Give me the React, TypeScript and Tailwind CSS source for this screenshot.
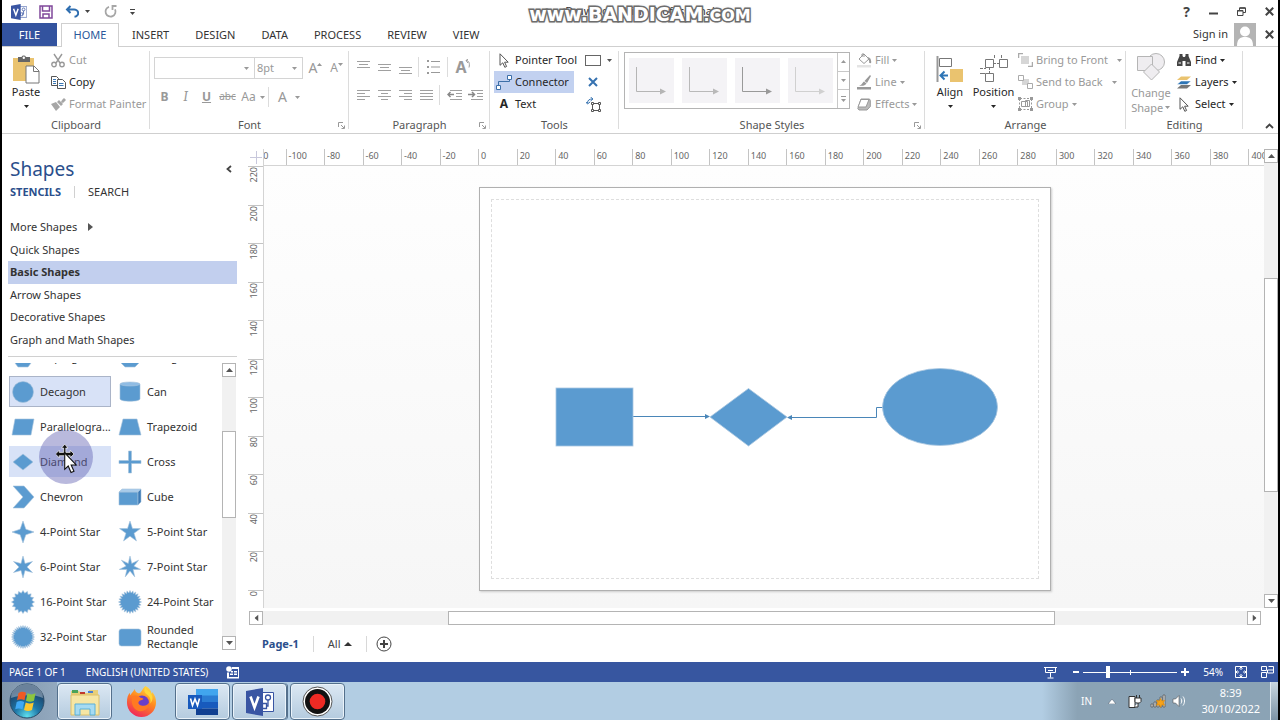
import type { ReactNode } from "react";

/* ---------- small helpers ---------- */

function Caret({ className = "" }: { className?: string }) {
  return (
    <svg width="5" height="3" viewBox="0 0 5 3" className={"shrink-0 " + className} aria-hidden="true">
      <path d="M0 0h5L2.500 3z" fill="currentColor" />
    </svg>
  );
}

function starPoints(n: number, outer: number, inner: number) {
  const pts: string[] = [];
  for (let i = 0; i < n * 2; i++) {
    const r = i % 2 ? inner : outer;
    const a = (Math.PI * i) / n - Math.PI / 2;
    pts.push(`${(12 + r * Math.cos(a)).toFixed(2)},${(12 + r * Math.sin(a)).toFixed(2)}`);
  }
  return pts.join(" ");
}

function RibbonGroup({
  label,
  width,
  launcher,
  children,
}: {
  label: string;
  width: string;
  launcher?: boolean;
  children: ReactNode;
}) {
  return (
    <section aria-label={label} className={"relative flex shrink-0 flex-col " + width}>
      <div className="flex flex-1 pt-0.5">{children}</div>
      <div className="flex h-4 items-center justify-center text-[#555]">{label}</div>
      {launcher && (
        <button aria-label={label + " options"} className="absolute right-1 bottom-1 text-[#999]">
          <svg width="7" height="7" viewBox="0 0 7 7" fill="none" stroke="currentColor">
            <path d="M.5 5V.5H5M3 3l3 3M6.500 3.500v3h-3" />
          </svg>
        </button>
      )}
      <div className="absolute top-1 right-0 bottom-1 w-px bg-[#dcdcdc]" />
    </section>
  );
}

function SmallButton({
  icon,
  label,
  disabled,
  active,
  caret,
  wideCaret,
}: {
  icon: ReactNode;
  label: string;
  disabled?: boolean;
  active?: boolean;
  caret?: boolean;
  wideCaret?: boolean;
}) {
  return (
    <button
      className={
        "flex h-[22px] items-center gap-[3px] pl-0.5 whitespace-nowrap " +
        (disabled ? "text-[#999] " : "text-[#262626] ") +
        (active ? "bg-[#c2d1f0]" : "")
      }
    >
      <span className="flex w-4 shrink-0 justify-center">{icon}</span>
      {label}
      {caret && <Caret className={wideCaret ? "ml-1.5" : ""} />}
    </button>
  );
}

/* ---------- ribbon icons ---------- */

const CutIcon = (
  <svg width="14" height="15" viewBox="0 0 14 15" fill="none" stroke="#999" strokeWidth="1.4">
    <path d="M3 1l6 9M11 1L5 10" />
    <circle cx="3" cy="11.500" r="2.200" />
    <circle cx="11" cy="11.500" r="2.200" />
  </svg>
);
const CopyIcon = (
  <svg width="15" height="13" viewBox="0 0 15 13" fill="#fff" stroke="#555">
    <path d="M.5.5h5l2 2v7h-7z" />
    <path d="M2 3.500h3M2 5.500h3M2 7.500h3" stroke="#3b78b5" />
    <path d="M6.500 3.500h5l3 3v6h-8z" />
    <path d="M8 7.500h4.500M8 9.500h4.500" stroke="#3b78b5" />
  </svg>
);
const PainterIcon = (
  <svg width="15" height="13" viewBox="0 0 15 13" fill="#a6a6a6">
    <path d="M0 6l5-2 4 5-4 4zM6 4l2-2 4 4-2 2zM11 2l2-2 2 2-3 3-2-1z" />
  </svg>
);
const PasteIcon = (
  <svg width="28" height="29" viewBox="0 0 28 29">
    <path d="M1 3h21v23H1z" fill="#eac36f" />
    <path d="M6 2h3.500a2.500 2.500 0 0 1 4.500 0H18v5H6z" fill="#666" />
    <circle cx="11.800" cy="2.800" r="1.200" fill="#fff" />
    <path d="M14 11h8l5 5v12H14z" fill="#fff" stroke="#777" />
    <path d="M21.500 11v5.500H27" fill="none" stroke="#777" />
  </svg>
);
const PointerIcon = (
  <svg width="10" height="15" viewBox="0 0 10 15" fill="#fff" stroke="#555">
    <path d="M1 .8v11.500l2.800-2.500 2 4.500 1.800-.8-2-4.300h3.600z" />
  </svg>
);
const ConnectorIcon = (
  <svg width="16" height="15" viewBox="0 0 16 15" fill="#fff" stroke="#3d6fa8">
    <path d="M2.500 10.500V6.500H13.500V5" fill="none" />
    <path d="M.5 10.500h4v4h-4zM11.500.5h4v4h-4z" />
  </svg>
);
const FillIcon = (
  <svg width="16" height="15" viewBox="0 0 16 15" fill="none" stroke="#999">
    <path d="M3 6l5-5 5 5-5 4.500zM6 4V1h2v3" />
    <path d="M12 5c2 1 2.500 3 2 5" strokeWidth="2" />
    <path d="M1 12h14v2.500H1z" fill="#e4e4e4" stroke="none" />
  </svg>
);
const LineIcon = (
  <svg width="16" height="15" viewBox="0 0 16 15" fill="#999">
    <path d="M1 12h14v2.500H1zM14 0l1 1-4 7-2.500-2zM8 6.500l2.500 2C9 11 6 11 3 10.500 6 10 6 8 8 6.500z" />
  </svg>
);
const EffectsIcon = (
  <svg width="14" height="13" viewBox="0 0 14 13" stroke="#999">
    <path d="M4 1h8.500l.8 1.500v6L10 12H2L.8 10.500z" fill="#bbb" />
    <path d="M4 1.500h8L9 9H1z" fill="#fff" />
  </svg>
);
const BringIcon = (
  <svg width="15" height="14" viewBox="0 0 15 14" fill="none" stroke="#aaa">
    <path d="M.5 5V.5H5M10 13.500h4.500V9" strokeWidth="1.500" />
    <path d="M3 3h8v8H3z" fill="#d6d6d6" stroke="none" />
  </svg>
);
const SendIcon = (
  <svg width="15" height="14" viewBox="0 0 15 14" fill="#fff" stroke="#aaa">
    <path d="M4 4h7v6H4z" fill="#d6d6d6" stroke="none" />
    <path d="M.5.5h5v5h-5zM9.500 8.500h5v5h-5z" />
  </svg>
);
const GroupIcon = (
  <svg width="15" height="14" viewBox="0 0 15 14" fill="none" stroke="#999">
    <path d="M1.500 2v10M13.500 2v10M2 1.500h11M2 12.500h11" strokeDasharray="2 1.500" />
    <path d="M3.500 4.500h6v5h-6zM7.500 3.500h4v6h-4z" />
    <path d="M0 0h3v3H0zM12 0h3v3h-3zM0 11h3v3H0zM12 11h3v3h-3z" fill="#999" stroke="none" />
  </svg>
);
const FindIcon = (
  <svg width="14" height="12" viewBox="0 0 14 12" fill="#444">
    <path d="M2.500 0h3v2l.8 1h1.400l.8-1V0h3v2L14 8v4H8.500V7h-3v5H0V8l2.500-6z" />
    <path d="M1.500 9h2.500M10 9h2.500" stroke="#fff" />
  </svg>
);
const LayersIcon = (
  <svg width="14" height="13" viewBox="0 0 14 13">
    <path d="M0 12.500L4 9h10l-4 3.500z" fill="#777" />
    <path d="M0 8.500L4 5h10l-4 3.500z" fill="#2e75b6" stroke="#fff" strokeWidth=".5" />
    <path d="M0 4L4 .5h10L10 4z" fill="#eac36f" />
  </svg>
);

function Lines({ rows, y0 = 2 }: { rows: [number, number][]; y0?: number }) {
  return (
    <svg width="13" height="14" viewBox="0 0 13 14" stroke="#a0a0a0">
      {rows.map(([a, b], i) => (
        <path key={i} d={`M${a} ${y0 + i * 3 + 0.5}H${b}`} />
      ))}
    </svg>
  );
}

function IndentIcon({ right }: { right?: boolean }) {
  return (
    <svg width="15" height="12" viewBox="0 0 15 12" fill="none" stroke="#a0a0a0">
      <path d="M3 1.500h12M9 4.500h6M9 7.500h6M3 10.500h12" />
      <path d={right ? "M0 5.500h6M4 3l2.500 2.500L4 8" : "M1 5.500h6M3.500 3L1 5.500 3.500 8"} strokeWidth="1.500" stroke="#888" />
    </svg>
  );
}

function Tool({ label, children, w = "w-[21px]" }: { label: string; children: ReactNode; w?: string }) {
  return (
    <button aria-label={label} className={"flex h-5 shrink-0 items-center justify-center text-[#999] " + w}>
      {children}
    </button>
  );
}

const Sep = () => <span className="h-5 w-px shrink-0 bg-[#dcdcdc]" />;

/* ---------- ribbon ---------- */

function Ribbon() {
  return (
    <div className="flex h-[87px] shrink-0 border-b border-[#cfcfcf]">
      <RibbonGroup label="Clipboard" width="w-[148px]">
        <button className="flex w-[46px] flex-col items-center pt-1.5 pl-0.5 text-[#262626]">
          {PasteIcon}
          <span>Paste</span>
          <Caret className="mt-1" />
        </button>
        <div className="flex flex-col items-start">
          <SmallButton icon={CutIcon} label="Cut" disabled />
          <SmallButton icon={CopyIcon} label="Copy" />
          <SmallButton icon={PainterIcon} label="Format Painter" disabled />
        </div>
      </RibbonGroup>

      <RibbonGroup label="Font" width="w-[199px]" launcher>
        <div className="flex flex-col gap-2 pt-2 pl-1">
          <div className="flex items-center">
            <div className="relative flex text-[#999]">
              <select aria-label="Font" className="h-[22px] w-[101px] appearance-none border border-[#d4d4d4] bg-white" />
              <Caret className="absolute top-[10px] right-1.5" />
            </div>
            <div className="relative -ml-px flex text-[#999]">
              <select
                aria-label="Font size"
                className="h-[22px] w-[49px] appearance-none border border-[#d4d4d4] bg-white pl-0.5"
              >
                <option>8pt</option>
              </select>
              <Caret className="absolute top-[10px] right-1.5" />
            </div>
            <Tool label="Grow font">
              <span className="pl-1 text-sm">A</span>
              <Caret className="mb-2 rotate-180" />
            </Tool>
            <Tool label="Shrink font">
              <span className="pl-1 text-xs">A</span>
              <Caret className="mb-2" />
            </Tool>
          </div>
          <div className="flex items-center text-xs">
            <Tool label="Bold"><b>B</b></Tool>
            <Tool label="Italic"><i className="font-serif text-sm">I</i></Tool>
            <Tool label="Underline"><b className="underline">U</b></Tool>
            <Tool label="Strikethrough"><span className="text-[10px] line-through">abc</span></Tool>
            <Tool label="Change case" w="w-[30px]">
              Aa
              <Caret className="ml-1" />
            </Tool>
            <Sep />
            <Tool label="Font color" w="w-[40px]">
              <span className="text-sm">A</span>
              <Caret className="ml-2" />
            </Tool>
          </div>
        </div>
      </RibbonGroup>

      <RibbonGroup label="Paragraph" width="w-[141px]" launcher>
        <div className="flex flex-col gap-2 pt-2 pl-1">
          <div className="flex items-center">
            <Tool label="Align top"><Lines rows={[[0, 13], [2, 11], [0, 13]]} y0={1} /></Tool>
            <Tool label="Align middle"><Lines rows={[[0, 13], [2, 11], [0, 13]]} y0={4} /></Tool>
            <Tool label="Align bottom"><Lines rows={[[0, 13], [2, 11], [0, 13]]} y0={7} /></Tool>
            <span className="w-0.5" />
            <Sep />
            <Tool label="Bullets" w="w-[28px]">
              <svg width="13" height="14" viewBox="0 0 13 14" fill="#999">
                <path d="M0 0h2v2H0zM0 6h2v2H0zM0 12h2v2H0zM4 1h9v1H4zM4 6.500h9v1H4zM4 12h9v1H4z" />
              </svg>
            </Tool>
            <Sep />
            <Tool label="Rotate text" w="w-[30px]">
              <b className="text-base">A</b>
              <svg width="6" height="9" viewBox="0 0 6 9" className="mb-2 -ml-0.5" fill="none" stroke="currentColor">
                <path d="M1 1.500c3 0 4 3 3 7M3 0L1 1.500 3 4" />
              </svg>
            </Tool>
          </div>
          <div className="flex items-center">
            <Tool label="Align left"><Lines rows={[[0, 13], [0, 8], [0, 13], [0, 8]]} /></Tool>
            <Tool label="Center"><Lines rows={[[0, 13], [3, 10], [0, 13], [3, 10]]} /></Tool>
            <Tool label="Align right"><Lines rows={[[0, 13], [5, 13], [0, 13], [5, 13]]} /></Tool>
            <Tool label="Justify"><Lines rows={[[0, 13], [0, 13], [0, 13], [0, 13]]} /></Tool>
            <span className="w-0.5" />
            <Sep />
            <span className="w-1" />
            <Tool label="Decrease indent"><IndentIcon /></Tool>
            <Tool label="Increase indent"><IndentIcon right /></Tool>
          </div>
        </div>
      </RibbonGroup>

      <RibbonGroup label="Tools" width="w-[129px]">
        <div className="flex w-[84px] shrink-0 flex-col items-stretch pl-1">
          <SmallButton icon={PointerIcon} label="Pointer Tool" />
          <SmallButton icon={ConnectorIcon} label="Connector" active />
          <SmallButton icon={<b className="text-xs">A</b>} label="Text" />
        </div>
        <div className="flex flex-col pl-[11px]">
          <button aria-label="Rectangle" className="flex h-[22px] items-center gap-1.5 text-[#555]">
            <span className="h-[11px] w-4 border border-[#666]" />
            <Caret />
          </button>
          <button aria-label="Connection point" className="flex h-[22px] w-4 items-center justify-center">
            <svg width="10" height="10" viewBox="0 0 10 10" stroke="#3672b0" strokeWidth="2">
              <path d="M1 1l8 8M9 1L1 9" />
            </svg>
          </button>
          <button aria-label="Text block" className="flex h-[22px] w-4 items-center justify-center">
            <svg width="15" height="15" viewBox="0 0 15 15" fill="#fff" stroke="#555">
              <path d="M6.500 6.500h7v7h-7z" />
              <path d="M5.500 5.500h2v2h-2zM12.500 5.500h2v2h-2zM5.500 12.500h2v2h-2zM12.500 12.500h2v2h-2z" />
              <path d="M1.500 6c0-3 2-4 5-4M4.500 0L7 2 4.500 4M0 5l1.500 2L4 5" fill="none" stroke="#3672b0" />
            </svg>
          </button>
        </div>
      </RibbonGroup>

      <RibbonGroup label="Shape Styles" width="w-[306px]" launcher>
        <div className="flex items-start pt-[3px] pl-[5px]">
          <div className="flex h-[57px] border border-[#b4b4b4]">
            <div className="flex items-center gap-2 px-1">
              {["#b5b5b5", "#b9b9b9", "#999", "#d0d0d0"].map((c, i) => (
                <button key={i} aria-label={"Line style " + (i + 1)} className="bg-[#f4f3f6]">
                  <svg width="45" height="45" viewBox="0 0 45 45" fill="none" stroke={c}>
                    <path d="M7.500 9v24.500H32" />
                    <path d="M31 30.500l6 3-6 3z" fill={c} stroke="none" />
                  </svg>
                </button>
              ))}
            </div>
            <div className="flex w-3 flex-col divide-y divide-[#c8c8c8] border-l border-[#c8c8c8] text-[#999]">
              <button aria-label="Previous styles" className="flex flex-1 items-center justify-center">
                <Caret className="rotate-180" />
              </button>
              <button aria-label="Next styles" className="flex flex-1 items-center justify-center">
                <Caret />
              </button>
              <button aria-label="More styles" className="flex flex-1 flex-col items-center justify-center gap-0.5">
                <span className="h-px w-[5px] bg-current" />
                <Caret />
              </button>
            </div>
          </div>
        </div>
        <div className="flex flex-col items-start pl-1">
          <SmallButton icon={FillIcon} label="Fill" disabled caret />
          <SmallButton icon={LineIcon} label="Line" disabled caret />
          <SmallButton icon={EffectsIcon} label="Effects" disabled caret />
        </div>
      </RibbonGroup>

      <RibbonGroup label="Arrange" width="w-[201px]">
        <button className="flex w-12 flex-col items-center pt-1.5 pl-0.5 text-[#262626]">
          <svg width="28" height="28" viewBox="0 0 28 28">
            <path d="M1.500 1v26" stroke="#999" strokeWidth="2" />
            <path d="M3.500 3.500h12v8h-12z" fill="#fff" stroke="#777" />
            <path d="M14 14h13v13H14z" fill="#eac36f" />
            <path d="M12 20.500H5M8.500 16.500l-4 4 4 4" fill="none" stroke="#2e75b6" strokeWidth="2" />
          </svg>
          <span className="mt-px">Align</span>
          <Caret className="mt-1" />
        </button>
        <button className="flex w-[41px] flex-col items-center pt-1.5 text-[#262626]">
          <svg width="28" height="28" viewBox="0 0 28 28" fill="#fff" stroke="#777">
            <path d="M14.500 0v4M21.500 0v4M13 8.500h6M9.500 12v7M0 13.500h6M2 18.500h4M0 18.500h4" strokeDasharray="3 1" />
            <path d="M5.500 4.500h8v8h-8zM19.500 4.500h8v8h-8zM5.500 18.500h8v8h-8z" />
          </svg>
          <span className="mt-px">Position</span>
          <Caret className="mt-1" />
        </button>
        <div className="flex flex-col items-start pl-px">
          <SmallButton icon={BringIcon} label="Bring to Front" disabled caret wideCaret />
          <SmallButton icon={SendIcon} label="Send to Back" disabled caret wideCaret />
          <SmallButton icon={GroupIcon} label="Group" disabled caret />
        </div>
      </RibbonGroup>

      <RibbonGroup label="Editing" width="w-[117px]">
        <button className="flex w-12 flex-col items-center pt-1 pl-0.5 text-[#999]">
          <svg width="30" height="28" viewBox="0 0 30 28" fill="#efedf0" stroke="#b5b5b5">
            <circle cx="20" cy="9" r="8.500" />
            <path d="M1.500 3.500h15v14h-15z" />
            <path d="M15.500 11l8 8-8 8-8-8z" />
          </svg>
          <span className="mt-1 leading-[15px]">
            Change
            <br />
            <span className="flex items-center gap-0.5">
              Shape
              <Caret />
            </span>
          </span>
        </button>
        <div className="flex flex-col items-start">
          <SmallButton icon={FindIcon} label="Find" caret />
          <SmallButton icon={LayersIcon} label="Layers" caret />
          <SmallButton icon={PointerIcon} label="Select" caret />
        </div>
      </RibbonGroup>
      <div className="flex flex-1 items-end justify-end p-1">
        <button aria-label="Collapse ribbon">
          <svg width="9" height="6" viewBox="0 0 9 6" fill="none" stroke="#444" strokeWidth="1.800">
            <path d="M1 5l3.500-3.500L8 5" />
          </svg>
        </button>
      </div>
    </div>
  );
}

/* ---------- title bar and tabs ---------- */

function CloseIcon() {
  return (
    <svg width="9" height="9" viewBox="0 0 9 9" stroke="#444" strokeWidth="2">
      <path d="M.8.8l7.400 7.400M8.200.8L.8 8.200" />
    </svg>
  );
}

function VisioLogo({ size }: { size: number }) {
  return (
    <svg width={size} height={size} viewBox="0 0 28 28">
      <path d="M13 4.500h14.500v19H13z" fill="#fff" stroke="#3955a3" />
      <g fill="none" stroke="#3955a3" strokeWidth="1.300">
        <circle cx="22" cy="9.500" r="2.500" />
        <path d="M16.500 15.500h4v5h-4zM22 12v6h-2" />
      </g>
      <path d="M0 3l17-3v28L0 25z" fill="#3955a3" />
      <path d="M4.500 8.500l4 11 4-11" fill="none" stroke="#fff" strokeWidth="2.600" />
    </svg>
  );
}

function TitleBar() {
  return (
    <header className="relative flex h-[23px] shrink-0 items-center justify-between pr-1 pl-[9px]">
      <div className="flex items-center">
        <VisioLogo size={16} />
        <button aria-label="Save" className="ml-3">
          <svg width="14" height="14" viewBox="0 0 14 14" fill="none" stroke="#80489b" strokeWidth="1.500">
            <path d="M1 1h12v12H1zM3.500 1v5h7V1M4 13V9h6v4" />
          </svg>
        </button>
        <button aria-label="Undo" className="ml-3 flex items-center gap-1.5 text-[#444]">
          <svg width="14" height="13" viewBox="0 0 14 13" fill="none" stroke="#2f6eb0" strokeWidth="2">
            <path d="M5.500 1L2 4.500 5.500 8M2 4.500h6.500a4 3.500 0 0 1 1 7.300" />
          </svg>
          <Caret />
        </button>
        <button aria-label="Repeat" className="ml-3.5">
          <svg width="13" height="13" viewBox="0 0 13 13" fill="none" stroke="#a6a6a6" strokeWidth="1.800">
            <path d="M5 1.800a5 5 0 1 0 6 2.500M12.500 1H8.500v4" />
          </svg>
        </button>
        <button aria-label="Customize toolbar" className="ml-[13px] flex flex-col gap-0.5 text-[#444]">
          <span className="h-px w-[5px] bg-current" />
          <Caret />
        </button>
      </div>
      <div className="flex items-center gap-[19px]">
        <button aria-label="Help" className="text-sm font-bold text-[#444]">?</button>
        <button aria-label="Minimize">
          <svg width="9" height="9" viewBox="0 0 9 9"><path d="M0 5.500h9v2H0z" fill="#444" /></svg>
        </button>
        <button aria-label="Restore">
          <svg width="9" height="9" viewBox="0 0 9 9" fill="#fff" stroke="#444">
            <path d="M2.500 1h6v4.500h-6z" />
            <path d="M.5 3.500h5.500V8.500H.5z" />
            <path d="M2.500 1h6M.5 3.800H6" strokeWidth="1.500" />
          </svg>
        </button>
        <button aria-label="Close"><CloseIcon /></button>
      </div>
      <div className="pointer-events-none absolute inset-0 flex items-center justify-center text-[#333]">
        <span>Drawing1 - Visio Professional</span>
      </div>
      <div className="pointer-events-none absolute inset-0 top-2 flex items-center justify-center">
        <span className="font-['DejaVu_Sans',sans-serif] text-[19px] leading-none font-bold whitespace-nowrap text-white [paint-order:stroke_fill] [-webkit-text-stroke:3px_#6a6a6a] [text-shadow:0_0_3px_#777]">
          www.BANDICAM<span className="text-base">.COM</span>
        </span>
      </div>
    </header>
  );
}

function TabBar() {
  return (
    <nav className="flex h-6 shrink-0 border-b border-[#cfcfcf] text-[#333]">
      <button className="w-[55px] bg-[#33539f] pt-0.5 text-white">FILE</button>
      <button className="relative -mb-px ml-1 w-[58px] border border-b-0 border-[#cfcfcf] bg-white text-[#2b579a]">
        HOME
      </button>
      {["INSERT", "DESIGN", "DATA", "PROCESS", "REVIEW", "VIEW"].map((t) => (
        <button key={t} className="px-[13px] pt-0.5">{t}</button>
      ))}
      <div className="ml-auto flex items-center gap-1.5 pr-1">
        <a href="#signin">Sign in</a>
        <svg width="22" height="23" viewBox="0 0 22 23">
          <path d="M0 0h22v23H0z" fill="#b4b4b4" />
          <circle cx="11" cy="8.500" r="5" fill="#fff" />
          <path d="M3 23c0-7 3-9 8-9s8 2 8 9z" fill="#fff" />
        </svg>
        <button aria-label="Close document" className="ml-[3px]"><CloseIcon /></button>
      </div>
    </nav>
  );
}

/* ---------- shapes panel ---------- */

const BLUE = "#5b9bd0";
const poly = (points: string) => <polygon points={points} />;

const shapes: { name: string; art: ReactNode; state?: "selected" | "hover" }[] = [
  { name: "Heptagon", art: poly("12,1 21,5 23,14 17,22 7,22 1,14 3,5") },
  { name: "Octagon", art: poly("7,1 17,1 23,7 23,16 17,22 7,22 1,16 1,7") },
  { name: "Decagon", art: <circle cx="12" cy="12" r="10.500" />, state: "selected" },
  {
    name: "Can",
    art: (
      <>
        <path d="M2 4v15c0 3 20 3 20 0V4z" />
        <ellipse cx="12" cy="4" rx="10" ry="2" fill="#8fbce4" />
      </>
    ),
  },
  { name: "Parallelogra...", art: poly("4,4 23,4 20,20 1,20") },
  { name: "Trapezoid", art: poly("5,4 19,4 23,20 1,20") },
  { name: "Diamond", art: poly("12,4 22,12 12,20 2,12"), state: "hover" },
  { name: "Cross", art: poly("10.5,1 13.5,1 13.5,10.5 23,10.5 23,13.5 13.5,13.5 13.5,23 10.5,23 10.5,13.5 1,13.5 1,10.5 10.5,10.5") },
  { name: "Chevron", art: poly("2,1 13,1 23,12 13,23 2,23 12,12") },
  {
    name: "Cube",
    art: (
      <>
        <path d="M1 7h19v13H1z" />
        <path d="M1 7l3-3h19l-3 3z" fill="#a9cbea" />
        <path d="M20 7l3-3v13l-3 3z" fill="#3d7ab5" />
      </>
    ),
  },
  { name: "4-Point Star", art: poly(starPoints(4, 11, 4)) },
  { name: "5-Point Star", art: poly(starPoints(5, 11, 4.2)) },
  { name: "6-Point Star", art: poly(starPoints(6, 11, 4)) },
  { name: "7-Point Star", art: poly(starPoints(7, 11, 4)) },
  { name: "16-Point Star", art: poly(starPoints(16, 11.5, 9)) },
  { name: "24-Point Star", art: poly(starPoints(24, 11.5, 9)) },
  { name: "32-Point Star", art: poly(starPoints(32, 11.5, 9)) },
  { name: "Rounded Rectangle", art: <rect x="1" y="4" width="22" height="17" rx="2.500" /> },
];

function MovePointer() {
  return (
    <div className="pointer-events-none absolute -top-3.5 left-[31px] z-10 flex size-[54px] items-center justify-center rounded-full bg-[#6464b4]/45 pt-1 pl-1">
      <svg width="24" height="31" viewBox="0 0 22 28" fill="#111" stroke="#fff" strokeWidth=".6">
        <path d="M8 0l3 3.500H9v4h4v-2L16.500 9 13 12.500v-2H3v2L-.5 9 3 5.500v2h4v-4H5z" />
        <path d="M8 8v15l3.200-3 2.600 6 2.700-1.200-2.600-5.800h4.600z" fill="#fff" stroke="#111" strokeWidth="1" />
      </svg>
    </div>
  );
}

const stencils = ["More Shapes", "Quick Shapes", "Basic Shapes", "Arrow Shapes", "Decorative Shapes", "Graph and Math Shapes"];

function ShapesPanel() {
  return (
    <aside className="flex w-[246px] shrink-0 flex-col pt-6 pr-[11px] pl-1.5 text-[#333]">
      <div className="flex h-[22px] items-center justify-between pr-[5px] pl-0.5">
        <h2 className="text-[19px] leading-none text-[#2b4f8c]">Shapes</h2>
        <button aria-label="Minimize shapes window">
          <svg width="6" height="8" viewBox="0 0 6 8" fill="none" stroke="#444" strokeWidth="1.800">
            <path d="M5 1L1.500 4 5 7" />
          </svg>
        </button>
      </div>
      <div className="mt-0.5 flex h-5 items-center pl-0.5">
        <button className="font-bold text-[#2b4f8c]">STENCILS</button>
        <span className="mx-[13px] h-3 w-px bg-[#d0d0d0]" />
        <button>SEARCH</button>
      </div>
      <ul className="mt-[14px] grid h-[135px] shrink-0 grid-rows-6">
        {stencils.map((s) => (
          <li key={s} className={"flex " + (s === "Basic Shapes" ? "bg-[#c2cfee] font-bold" : "")}>
            <button className="flex flex-1 items-center gap-[11px] pl-0.5">
              {s}
              {s === "More Shapes" && (
                <svg width="5" height="8" viewBox="0 0 5 8"><path d="M0 0l5 4-5 4z" fill="#555" /></svg>
              )}
            </button>
          </li>
        ))}
      </ul>
      <div className="mt-[5px] h-px shrink-0 bg-[#d0d0d0]" />
      <div className="mt-1.5 mb-3 flex min-h-0 flex-1 justify-between pr-px">
        <div className="flex-1 overflow-hidden">
          <div className="-mt-6 grid w-[210px] grid-cols-2 gap-x-1">
            {shapes.map((s) => (
              <div key={s.name} className="relative flex h-[35px] items-center py-0.5">
                <button
                  className={
                    "ml-px flex h-full w-full items-center gap-[5px] border pl-px text-left leading-[14px] " +
                    (s.state === "selected"
                      ? "border-[#aab4c8] bg-[#d8e2f7]"
                      : s.state === "hover"
                        ? "border-[#d8e2f7] bg-[#d8e2f7]"
                        : "border-transparent")
                  }
                >
                  <svg width="24" height="24" viewBox="0 0 24 24" fill={BLUE} stroke="#a6c3dc" strokeWidth=".6" className="shrink-0">
                    {s.art}
                  </svg>
                  {s.name}
                </button>
                {s.state === "hover" && <MovePointer />}
              </div>
            ))}
          </div>
        </div>
        <VScroll before="grow-[54]" thumb="grow-[85]" after="grow-[118]" />
      </div>
    </aside>
  );
}

/* ---------- scroll bars ---------- */

function ScrollButton({ label, turn }: { label: string; turn: string }) {
  return (
    <button
      aria-label={label}
      className="flex size-[14px] shrink-0 items-center justify-center border border-[#b4b4b4] bg-white text-[#555]"
    >
      <svg width="7" height="4" viewBox="0 0 7 4" className={"shrink-0 " + turn} aria-hidden="true">
        <path d="M0 0h7L3.500 4z" fill="currentColor" />
      </svg>
    </button>
  );
}

function VScroll({ before, thumb, after }: { before: string; thumb: string; after: string }) {
  return (
    <div className="flex w-[14px] shrink-0 flex-col bg-[#f1f1f1]">
      <ScrollButton label="Scroll up" turn="rotate-180" />
      <div className={before} />
      <div className={"border border-[#b4b4b4] bg-white " + thumb} />
      <div className={after} />
      <ScrollButton label="Scroll down" turn="" />
    </div>
  );
}

/* ---------- drawing area ---------- */

const hMarks = Array.from({ length: 27 }, (_, i) => -120 + i * 20);
const vMarks = Array.from({ length: 12 }, (_, i) => 220 - i * 20);

function DrawingArea() {
  return (
    <main className="flex min-w-0 flex-1 flex-col pt-[15px]">
      <div className="flex min-h-0 flex-1">
        <div className="flex w-4 shrink-0 flex-col border-r border-[#d4d4d4]">
          <svg width="14" height="17" viewBox="0 0 14 17" stroke="#c8c8dc" className="shrink-0">
            <path d="M8.500 2v13M2 8.500h12" />
          </svg>
          <div className="min-h-0 flex-1 overflow-hidden">
            <div className="grid h-[462px] grid-rows-12 text-[9px] leading-[11px] text-[#666]">
              {vMarks.map((m) => (
                <div key={m} className="border-t border-[#c4c4c4]">
                  <span className="block rotate-180 text-right [writing-mode:vertical-rl]">{m}</span>
                </div>
              ))}
            </div>
          </div>
        </div>
        <div className="flex min-w-0 flex-1 flex-col">
          <div className="h-[17px] shrink-0 overflow-hidden border-b border-[#d4d4d4]">
            <div className="-ml-[17px] grid h-full w-[104%] text-[9px] leading-[14px] text-[#666] [grid-template-columns:repeat(27,minmax(0,1fr))]">
              {hMarks.map((m) => (
                <span key={m} className="border-l border-[#c4c4c4] pl-0.5">{m}</span>
              ))}
            </div>
          </div>
          <div className="flex flex-1 items-center justify-center bg-linear-to-b from-[#fefefe] to-[#f6f6f6] pt-1 pl-0.5">
            <div className="border border-[#b0b0b0] bg-white p-[11px] shadow-[1px_1px_2px_#ccc]">
              <div className="border border-dashed border-[#dedede]">
                <svg width="546" height="378" viewBox="492 200 546 378" className="block" role="img" aria-label="Diagram">
                  <g fill="none" stroke="#4a86b8">
                    <path d="M633 416.500h74M790 417.500h86.500v-10H883" />
                  </g>
                  <g fill="#4a86b8">
                    <path d="M705 414l5 2.500-5 2.500zM792 415l-5 2.500 5 2.500z" />
                  </g>
                  <g fill={BLUE} stroke="#a9c6e0" strokeWidth=".8">
                    <rect x="556" y="388" width="77" height="58" />
                    <path d="M748.500 388.500L787 417l-38.500 29L710 417z" />
                    <ellipse cx="940" cy="407" rx="57.500" ry="38.500" />
                  </g>
                </svg>
              </div>
            </div>
          </div>
        </div>
        <VScroll before="grow-[114]" thumb="grow-[211]" after="grow-[101]" />
      </div>
      <div className="mt-[3px] mr-[17px] ml-px flex h-[14px] shrink-0 bg-[#f1f1f1]">
        <ScrollButton label="Scroll left" turn="rotate-90" />
        <div className="grow-[185]" />
        <div className="grow-[606] border border-[#b4b4b4] bg-white" />
        <div className="grow-[192]" />
        <ScrollButton label="Scroll right" turn="-rotate-90" />
      </div>
      <div className="flex h-[37px] shrink-0 items-center pt-px pl-[14px] text-[#444]">
        <button className="font-bold text-[#2b4f8c]">Page-1</button>
        <span className="mx-[14px] h-4 w-px bg-[#d8d8d8]" />
        <button className="flex items-center gap-1">
          All
          <svg width="8" height="4" viewBox="0 0 8 4"><path d="M0 4h8L4 0z" fill="#333" /></svg>
        </button>
        <span className="mr-[9px] ml-[14px] h-4 w-px bg-[#d8d8d8]" />
        <button aria-label="Insert page">
          <svg width="16" height="16" viewBox="0 0 16 16" fill="none" stroke="#444">
            <circle cx="8" cy="8" r="7" />
            <path d="M8 4v8M4 8h8" strokeWidth="2" />
          </svg>
        </button>
      </div>
    </main>
  );
}

/* ---------- status bar and taskbar ---------- */

function StatusBar() {
  return (
    <footer className="flex h-5 shrink-0 items-center bg-[#3756a0] pr-1 pl-[7px] text-[10px] text-white">
      <span>PAGE 1 OF 1</span>
      <span className="ml-5">ENGLISH (UNITED STATES)</span>
      <button aria-label="Macro" className="ml-[18px]">
        <svg width="13" height="13" viewBox="0 0 13 13" fill="#fff">
          <circle cx="3" cy="3" r="2.800" />
          <path d="M6 1h7v2H6zM1 6.500h2V12H1zM1 11h12v1.500H1zM12 3h1v9h-1zM5 5h2v1.500H5zM8 5h3v1.500H8zM4 7.500h3V9H4zM8 7.500h3V9H8z" />
        </svg>
      </button>
      <div className="ml-auto flex items-center">
        <button aria-label="Presentation mode" className="mr-4">
          <svg width="13" height="13" viewBox="0 0 13 13" fill="none" stroke="#fff">
            <path d="M0 1.500h13M1.500 2v4.500h10V2M4 4.500h5M6.500 7v4.500M3.500 12h6" />
          </svg>
        </button>
        <button aria-label="Zoom out" className="h-0.5 w-1.5 bg-white" />
        <div className="relative mx-1 flex w-[94px] items-center">
          <span className="absolute left-1/2 h-[5px] w-px bg-white" />
          <input
            type="range"
            aria-label="Zoom"
            defaultValue={25}
            className="h-px w-full appearance-none bg-white [&::-webkit-slider-thumb]:h-3 [&::-webkit-slider-thumb]:w-1 [&::-webkit-slider-thumb]:appearance-none [&::-webkit-slider-thumb]:bg-white"
          />
        </div>
        <button aria-label="Zoom in">
          <svg width="8" height="8" viewBox="0 0 8 8" stroke="#fff" strokeWidth="2"><path d="M0 4h8M4 0v8" /></svg>
        </button>
        <span className="ml-[14px]">54%</span>
        <button aria-label="Fit page" className="ml-3">
          <svg width="12" height="12" viewBox="0 0 12 12" fill="none" stroke="#fff">
            <path d="M.5.5h11v11H.5z" />
            <path d="M6 1v3M6 8v3M1 6h3M8 6h3M4.500 2.500L6 1l1.500 1.500M4.500 9.500L6 11l1.500-1.500M2.500 4.500L1 6l1.500 1.500M9.500 4.500L11 6 9.500 7.500" />
          </svg>
        </button>
        <button aria-label="Switch windows" className="ml-[14px]">
          <svg width="13" height="12" viewBox="0 0 13 12" fill="none" stroke="#fff">
            <path d="M.5.5h5v4h-5zM.5 6.500h5v5h-5zM7.500.5h5v3M12.500 1v6h-6V4h6" />
          </svg>
        </button>
      </div>
    </footer>
  );
}

function TaskButton({ label, plain, children }: { label: string; plain?: boolean; children: ReactNode }) {
  return (
    <button
      aria-label={label}
      className={
        "flex h-[37px] w-[55px] items-center justify-center " +
        (plain ? "" : "rounded-sm border border-[#54708c] bg-linear-to-b from-[#dce8f3] to-[#b4cbdf] shadow-[inset_0_0_0_1px_#eaf3fa]")
      }
    >
      {children}
    </button>
  );
}

function Taskbar() {
  return (
    <div className="flex h-[38px] shrink-0 items-end bg-[#b2cde3]">
      <button
        aria-label="Start"
        className="flex h-full w-[55px] items-center justify-center bg-linear-to-r from-[#7f95ab] to-[#93a9bf] pr-1.5"
      >
        <svg width="36" height="36" viewBox="0 0 36 36">
          <defs>
            <radialGradient id="orb" cx=".5" cy=".95" r=".8">
              <stop offset="0" stopColor="#5fe0ee" />
              <stop offset=".45" stopColor="#1f78a8" />
              <stop offset="1" stopColor="#1b3f66" />
            </radialGradient>
          </defs>
          <circle cx="18" cy="18" r="17" fill="url(#orb)" stroke="#2a4a66" />
          <path d="M2 15a16 14 0 0 1 32 0c-10-4-22-3-32 0z" fill="#fff" opacity=".35" />
          <path d="M9.500 10c3-1.800 5-1.500 7.500-.3l-1.500 7.500c-2.500-1.200-5-1.200-7.500 0z" fill="#ee5a24" />
          <path d="M18.500 10.300c3 1.500 5 1.500 8 0L25 17.800c-3 1.400-5 1.300-8 0z" fill="#8cc63f" />
          <path d="M7.700 19c2.500-1.300 5-1.300 7.500 0l-1.700 7.300c-2.500-1.200-5-1.200-7.300 0z" fill="#3fa9f5" />
          <path d="M16.700 19.400c3 1.400 5 1.400 8 0L23 27c-3 1.400-5 1.300-8 0z" fill="#fdc82f" />
        </svg>
      </button>
      <div className="flex flex-1 items-end gap-0.5">
        <TaskButton label="File Explorer">
          <svg width="30" height="30" viewBox="0 0 30 30">
            <path d="M1 4h8l2 2h8V3h9v5h1v20H1z" fill="#e8cf7a" />
            <path d="M2 3h6v3H2z" fill="#4aa35a" />
            <path d="M18 4h5v2h-5z" fill="#4a7fd0" />
            <path d="M10 5h5v2h-5z" fill="#c0392b" />
            <path d="M1 8h28v20H1z" fill="#f6e6a4" stroke="#dcc06a" />
            <path d="M5 28V17h20v11h-5v-6H10v6z" fill="#a6dbf2" stroke="#5bb0d8" />
          </svg>
        </TaskButton>
        <TaskButton label="Firefox" plain>
          <svg width="31" height="31" viewBox="0 0 32 32">
            <defs>
              <linearGradient id="fox" x1=".8" y1="0" x2=".3" y2="1">
                <stop offset="0" stopColor="#ffe14a" />
                <stop offset=".45" stopColor="#ff8a1e" />
                <stop offset="1" stopColor="#f0245c" />
              </linearGradient>
            </defs>
            <path
              d="M20 0c4 2 6 5 6.500 8 1-.5.5-2 .5-2 3 4 4 7 4 11a15 15 0 0 1-30 0c0-5 1-8 3-10 0 1 .2 2 .5 2.500C6 7 8 5 9 3c.5 2.500 2 4 4 4.500 3 .5 3-4 7-7.500z"
              fill="url(#fox)"
            />
            <circle cx="16.500" cy="17" r="7.200" fill="#6a3fc8" />
            <path d="M6 11c4-2 7-1 9 1 2 .3 3 .8 3 1.500-1 1.500-4 1-5 3s2 4 5 4c3 0 5-1.500 6-4 0 6-4 9.500-9 9.500S6 21 6 16z" fill="#ff7a22" />
            <path d="M20 1c-2 3-1 6 2 8s4 5 3 9c3-3 3-7 1-10-1-3-5-3-6-7z" fill="#ffd83a" />
          </svg>
        </TaskButton>
        <span className="w-0.5" />
        <TaskButton label="Word">
          <svg width="30" height="28" viewBox="0 0 30 28">
            <path d="M8 1h22v7H8z" fill="#41a5ee" />
            <path d="M8 7.500h22V14H8z" fill="#2b7cd3" />
            <path d="M8 14h22v6.500H8z" fill="#185abd" />
            <path d="M8 20.500h22V27H8z" fill="#103f91" />
            <path d="M0 7h14v14H0z" fill="#185abd" />
            <path d="M2.500 10.500l2 7L7 11l2.500 6.500 2-7" fill="none" stroke="#fff" strokeWidth="1.600" />
          </svg>
        </TaskButton>
        <div className="flex rounded-sm border-r border-[#54708c]">
          <TaskButton label="Visio"><VisioLogo size={28} /></TaskButton>
        </div>
        <TaskButton label="Recorder">
          <svg width="31" height="31" viewBox="0 0 31 31">
            <circle cx="15.500" cy="15.500" r="14.500" fill="#fff" stroke="#555" />
            <circle cx="15.500" cy="15.500" r="12.500" fill="#111" />
            <circle cx="15.500" cy="15.500" r="7.800" fill="#ee2a24" />
          </svg>
        </TaskButton>
      </div>
      <div className="flex h-full w-[236px] items-center bg-linear-to-r from-[#b2cde3] to-[#8ba3b5] to-15% text-white">
        <span className="ml-[39px] text-[10px]">IN</span>
        <button aria-label="Show hidden icons" className="ml-4">
          <svg width="8" height="5" viewBox="0 0 8 5"><path d="M0 5h8L4 0z" fill="#fff" stroke="#456" strokeWidth=".5" /></svg>
        </button>
        <svg width="14" height="15" viewBox="0 0 14 15" className="ml-3" fill="#fff" stroke="#333">
          <path d="M1 2.500h6v11H1z" />
          <path d="M7 4h6v3.500L11.500 9h-3L7 7.500zM8.500 1v3M11.500 1v3M10 9v4H6" />
        </svg>
        <svg width="16" height="14" viewBox="0 0 16 14" className="ml-2" fill="#d8d8d8" stroke="#555" strokeWidth=".7">
          <path d="M1 10h2v3H1zM4 8h2v5H4zM7 6h2v7H7zM10 3h2v10h-2zM13 1h2v12h-2z" />
          <path d="M10.500 4.500l1.200 2.500 2.800-.5-1.300 2.300 1.300 2.400-2.800-.4-1.200 2.500-1.200-2.500-2.800.4 1.300-2.400-1.300-2.300 2.800.5z" fill="#f6a21a" stroke="#e08b00" />
        </svg>
        <svg width="14" height="14" viewBox="0 0 14 14" className="ml-1.5" fill="#fff" stroke="#fff">
          <path d="M1 5h2.500L7 1.500v11L3.500 9H1z" stroke="#555" strokeWidth=".6" />
          <path d="M9 4.500c1 1.500 1 3.500 0 5M11 2.500c2 2.500 2 6.500 0 9" fill="none" />
        </svg>
        <div className="ml-auto pr-2.5 text-center leading-4">
          <div>8:39</div>
          <div>30/10/2022</div>
        </div>
        <button aria-label="Show desktop" className="h-full w-2 border-l border-[#dfe9f0] bg-linear-to-b from-[#c8d6e0] to-[#7c93a6]" />
      </div>
    </div>
  );
}

export default function App() {
  return (
    <div className="flex h-screen min-h-[600px] flex-col border-x-2 border-black bg-white font-['Noto_Sans','Open_Sans',sans-serif] text-[11px]">
      <TitleBar />
      <TabBar />
      <Ribbon />
      <div className="flex min-h-0 flex-1">
        <ShapesPanel />
        <DrawingArea />
      </div>
      <StatusBar />
      <Taskbar />
    </div>
  );
}
